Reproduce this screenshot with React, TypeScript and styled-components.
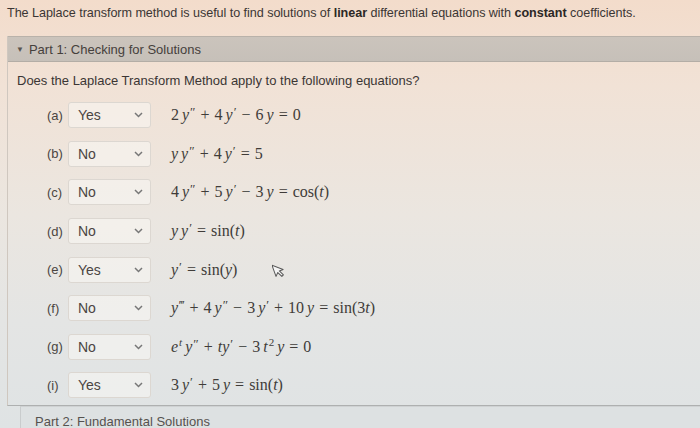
import React from "react";
import styled, { createGlobalStyle } from "styled-components";

const Global = createGlobalStyle`
  html, body { margin: 0; padding: 0; }
  body {
    width: 700px;
    height: 428px;
    overflow: hidden;
    background: linear-gradient(180deg, #f3dccb 0%, #f1e2d6 20%, #ebe6e0 50%, #e4e5e4 75%, #dfe3e4 100%);
    font-family: "Liberation Sans", Arial, sans-serif;
    color: #3a3633;
  }
`;

const Page = styled.div`
  position: relative;
  width: 700px;
  height: 428px;
  overflow: hidden;
  padding: 5px 0 0 7px;
  box-sizing: border-box;
`;

const Intro = styled.p`
  margin: 0;
  font-size: 12.6px;
  line-height: 16px;
  color: #3b3634;
  letter-spacing: -0.05px;
  b { font-weight: bold; color: #2c2826; }
`;

const Panel = styled.section`
  margin-top: 15px;
  border-left: 1px solid #cfc7bf;
  border-bottom: 1.5px solid #aeb0b0;
`;

const PanelHeader = styled.div`
  height: 24px;
  display: flex;
  align-items: center;
  gap: 5px;
  padding-left: 8px;
  background: linear-gradient(180deg, #cbc4bc, #c6c0b9);
  border-top: 1px solid #b9b2aa;
  border-bottom: 1px solid #b3ada6;
  font-size: 13px;
  color: #45403c;
`;

const Caret = styled.span`
  font-size: 8px;
  color: #5a5550;
  margin-top: 1px;
`;

const PanelBody = styled.div`
  padding: 11px 0 0 9px;
`;

const Question = styled.div`
  font-size: 13px;
  line-height: 16px;
  color: #3b3634;
  margin-bottom: 7px;
`;

const Rows = styled.div`
  display: flex;
  flex-direction: column;
  padding-left: 30px;
`;

const Row = styled.div`
  display: flex;
  align-items: center;
  height: 38.6px;
`;

const Label = styled.span`
  width: 21px;
  font-size: 13px;
  color: #4a4541;
`;

const Select = styled.div`
  width: 83px;
  height: 26px;
  box-sizing: border-box;
  border: 1px solid #dcd7d1;
  border-radius: 3px;
  background: rgba(250, 247, 244, 0.55);
  display: flex;
  align-items: center;
  justify-content: space-between;
  padding: 0 7px 0 9px;
  font-size: 14px;
  color: #4a4542;
`;

const Eq = styled.span`
  display: inline-block;
  margin-left: 20px;
  font-family: "Liberation Serif", "DejaVu Serif", serif;
  font-size: 16px;
  line-height: 20px;
  color: #403c39;
  white-space: nowrap;
`;

const V = styled.i`
  font-style: italic;
`;

const Op = styled.span`
  margin: 0 5px;
`;

const Sup = styled.sup`
  font-size: 11px;
  vertical-align: 6px;
  line-height: 0;
  margin-left: 1px;
`;

const Prime = styled.span`
  font-size: 13px;
  vertical-align: 4px;
  line-height: 0;
  margin-left: 1px;
`;

const Gap = styled.span`
  display: inline-block;
  width: 3px;
`;

const Part2 = styled.div`
  margin: 0 0 0 13px;
  height: 24px;
  border-left: 1px solid #c9cccd;
  border-top: 1px solid #cfd2d3;
  background: #dde1e2;
  padding: 7px 0 0 14px;
  box-sizing: border-box;
  font-size: 13px;
  color: #55524f;
`;

const Cursor = styled.svg`
  position: absolute;
  left: 272px;
  top: 261px;
`;

const Chevron = () => (
  <svg width="9" height="6" viewBox="0 0 9 6">
    <polyline points="1,1 4.5,4.5 8,1" fill="none" stroke="#777" strokeWidth="1.5" />
  </svg>
);

const P1 = () => <Prime>′</Prime>;
const P2 = () => <Prime>″</Prime>;
const P3 = () => <Prime>‴</Prime>;

const rows: { label: string; answer: string; eq: React.ReactNode }[] = [
  {
    label: "(a)",
    answer: "Yes",
    eq: (
      <>
        2<Gap /><V>y</V><P2 /><Op>+</Op>4<Gap /><V>y</V><P1 /><Op>−</Op>6<Gap /><V>y</V><Op>=</Op>0
      </>
    ),
  },
  {
    label: "(b)",
    answer: "No",
    eq: (
      <>
        <V>y</V><Gap /><V>y</V><P2 /><Op>+</Op>4<Gap /><V>y</V><P1 /><Op>=</Op>5
      </>
    ),
  },
  {
    label: "(c)",
    answer: "No",
    eq: (
      <>
        4<Gap /><V>y</V><P2 /><Op>+</Op>5<Gap /><V>y</V><P1 /><Op>−</Op>3<Gap /><V>y</V><Op>=</Op>cos(<V>t</V>)
      </>
    ),
  },
  {
    label: "(d)",
    answer: "No",
    eq: (
      <>
        <V>y</V><Gap /><V>y</V><P1 /><Op>=</Op>sin(<V>t</V>)
      </>
    ),
  },
  {
    label: "(e)",
    answer: "Yes",
    eq: (
      <>
        <V>y</V><P1 /><Op>=</Op>sin(<V>y</V>)
      </>
    ),
  },
  {
    label: "(f)",
    answer: "No",
    eq: (
      <>
        <V>y</V><P3 /><Op>+</Op>4<Gap /><V>y</V><P2 /><Op>−</Op>3<Gap /><V>y</V><P1 /><Op>+</Op>10<Gap /><V>y</V><Op>=</Op>sin(3<V>t</V>)
      </>
    ),
  },
  {
    label: "(g)",
    answer: "No",
    eq: (
      <>
        <V>e</V><Sup><V>t</V></Sup><Gap /><V>y</V><P2 /><Op>+</Op><V>t</V><V>y</V><P1 /><Op>−</Op>3<Gap /><V>t</V><Sup>2</Sup><Gap /><V>y</V><Op>=</Op>0
      </>
    ),
  },
  {
    label: "(i)",
    answer: "Yes",
    eq: (
      <>
        3<Gap /><V>y</V><P1 /><Op>+</Op>5<Gap /><V>y</V><Op>=</Op>sin(<V>t</V>)
      </>
    ),
  },
];

export default function App() {
  return (
    <Page>
      <Global />
      <Intro>
        The Laplace transform method is useful to find solutions of <b>linear</b> differential equations with{" "}
        <b>constant</b> coefficients.
      </Intro>
      <Panel>
        <PanelHeader>
          <Caret>▼</Caret>
          Part 1: Checking for Solutions
        </PanelHeader>
        <PanelBody>
          <Question>Does the Laplace Transform Method apply to the following equations?</Question>
          <Rows>
            {rows.map((r) => (
              <Row key={r.label}>
                <Label>{r.label}</Label>
                <Select>
                  <span>{r.answer}</span>
                  <Chevron />
                </Select>
                <Eq>{r.eq}</Eq>
              </Row>
            ))}
          </Rows>
        </PanelBody>
      </Panel>
      <Part2>Part 2: Fundamental Solutions</Part2>
      <Cursor width="14" height="18" viewBox="0 0 14 18">
        <path d="M2 2 L2 14 L5 11 L7.5 16 L9.5 15 L7 10 L11 10 Z" fill="#f4f4f4" stroke="#555" strokeWidth="1" strokeLinejoin="round" transform="rotate(-20 7 9)" />
      </Cursor>
    </Page>
  );
}
